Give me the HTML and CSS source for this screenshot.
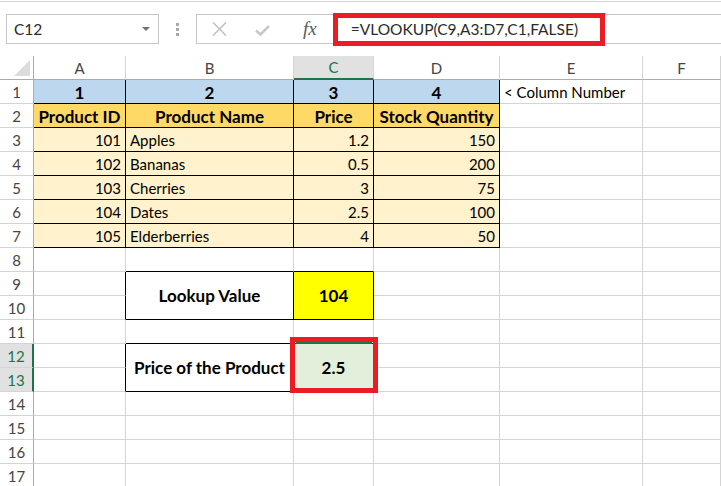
FILE: index.html
```html
<!DOCTYPE html>
<html>
<head>
<meta charset="utf-8">
<link rel="stylesheet" href="styles.css">
</head>
<body>
<div class="app">
  <div class="toolbar">
    <div class="namebox"><span class="nb-text">C12</span><span class="caret"></span></div>
    <div class="grip"><i></i><i></i><i></i></div>
    <div class="fbar">
      <svg class="ico-x" width="15" height="14" viewBox="0 0 15 14"><path d="M1 0.5 L14 13.5 M14 0.5 L1 13.5" stroke="#c3c3c3" stroke-width="1.6" fill="none"/></svg>
      <svg class="ico-ok" width="15" height="11" viewBox="0 0 15 11"><path d="M1 5.5 L5.5 9.5 L14 1" stroke="#c8c8c8" stroke-width="2.6" fill="none"/></svg>
      <span class="fx">fx</span>
      <span class="ftext">=VLOOKUP(C9,A3:D7,C1,FALSE)</span>
      <div class="hl-formula"></div>
    </div>
  </div>
  <table class="sheet">
    <colgroup>
      <col class="w-rh"><col class="w-a"><col class="w-b"><col class="w-c"><col class="w-d"><col class="w-e"><col class="w-f">
    </colgroup>
    <tr class="hdr">
      <td class="corner"><svg width="16" height="16" viewBox="0 0 16 16"><path d="M16 0 L16 16 L0 16 Z" fill="#dcdcdc"/></svg></td>
      <td class="ch">A</td><td class="ch">B</td><td class="ch sel">C</td><td class="ch">D</td><td class="ch">E</td><td class="ch">F</td>
    </tr>
    <tr>
      <td class="rh">1</td>
      <td class="bk blue c b">1</td><td class="bk blue c b">2</td><td class="bk blue c b">3</td><td class="bk blue c b">4</td>
      <td class="l">&lt; Column Number</td><td></td>
    </tr>
    <tr>
      <td class="rh">2</td>
      <td class="bk gold c b">Product ID</td><td class="bk gold c b">Product Name</td><td class="bk gold c b">Price</td><td class="bk gold c b">Stock Quantity</td>
      <td></td><td></td>
    </tr>
    <tr>
      <td class="rh">3</td>
      <td class="bk cream r">101</td><td class="bk cream l">Apples</td><td class="bk cream r">1.2</td><td class="bk cream r">150</td>
      <td></td><td></td>
    </tr>
    <tr>
      <td class="rh">4</td>
      <td class="bk cream r">102</td><td class="bk cream l">Bananas</td><td class="bk cream r">0.5</td><td class="bk cream r">200</td>
      <td></td><td></td>
    </tr>
    <tr>
      <td class="rh">5</td>
      <td class="bk cream r">103</td><td class="bk cream l">Cherries</td><td class="bk cream r">3</td><td class="bk cream r">75</td>
      <td></td><td></td>
    </tr>
    <tr>
      <td class="rh">6</td>
      <td class="bk cream r">104</td><td class="bk cream l">Dates</td><td class="bk cream r">2.5</td><td class="bk cream r">100</td>
      <td></td><td></td>
    </tr>
    <tr>
      <td class="rh">7</td>
      <td class="bk cream r">105</td><td class="bk cream l">Elderberries</td><td class="bk cream r">4</td><td class="bk cream r">50</td>
      <td></td><td></td>
    </tr>
    <tr>
      <td class="rh">8</td>
      <td></td><td class="bb"></td><td class="bb"></td><td></td><td></td><td></td>
    </tr>
    <tr>
      <td class="rh">9</td>
      <td class="br"></td>
      <td class="bk c b mid" rowspan="2">Lookup Value</td>
      <td class="bk yellow c b mid" rowspan="2">104</td>
      <td></td><td></td><td></td>
    </tr>
    <tr>
      <td class="rh">10</td>
      <td class="br"></td>
      <td></td><td></td><td></td>
    </tr>
    <tr>
      <td class="rh">11</td>
      <td></td><td class="bb"></td><td class="bb"></td><td></td><td></td><td></td>
    </tr>
    <tr>
      <td class="rh rsel">12</td>
      <td class="br"></td>
      <td class="bk c b mid" rowspan="2">Price of the Product</td>
      <td class="bk green c b mid active" rowspan="2">2.5<div class="hl-cell"><div class="selbar"></div></div></td>
      <td></td><td></td><td></td>
    </tr>
    <tr>
      <td class="rh rsel">13</td>
      <td class="br"></td>
      <td></td><td></td><td></td>
    </tr>
    <tr><td class="rh">14</td><td></td><td></td><td></td><td></td><td></td><td></td></tr>
    <tr><td class="rh">15</td><td></td><td></td><td></td><td></td><td></td><td></td></tr>
    <tr><td class="rh">16</td><td></td><td></td><td></td><td></td><td></td><td></td></tr>
    <tr><td class="rh">17</td><td></td><td></td><td></td><td></td><td></td><td></td></tr>
  </table>
</div>
</body>
</html>
```
FILE: styles.css
```css
* { box-sizing: border-box; }
html, body { margin: 0; padding: 0; background: #fff; }
body {
  width: 721px;
  height: 486px;
  overflow: hidden;
  font-family: Lato, "Liberation Sans", sans-serif;
  font-size: 15px;
  color: #000;
}
.app { width: 721px; }

.toolbar {
  margin-top: 1px;
  border-top: 1px solid #d6d6d6;
  height: 55px;
  padding-top: 12px;
  display: flex;
  align-items: flex-start;
}
.namebox {
  margin-left: 6px;
  width: 153px;
  height: 30px;
  border: 1px solid #c6c6c6;
  display: flex;
  align-items: center;
  justify-content: space-between;
  padding: 0 8px 0 7px;
  color: #2b2b2b;
  font-size: 15.5px;
}
.caret {
  width: 0; height: 0;
  border-left: 4px solid transparent;
  border-right: 4px solid transparent;
  border-top: 4px solid #727272;
}
.grip {
  margin-left: 17px;
  width: 3px;
  height: 30px;
  display: flex;
  flex-direction: column;
  justify-content: center;
  gap: 2px;
}
.grip i { display: block; width: 3px; height: 3px; background: #a9a9a9; }

.fbar {
  position: relative;
  margin-left: 17px;
  flex: 1;
  height: 30px;
  border: 1px solid #c6c6c6;
  border-right: none;
  display: flex;
  align-items: center;
}
.ico-x { margin-left: 15px; }
.ico-ok { margin-left: 28px; margin-top: 2px; }
.fx {
  margin-left: 33px;
  font-family: "Liberation Serif", serif;
  font-style: italic;
  font-size: 19px;
  color: #5a5a5a;
  line-height: 1;
  margin-top: -2px;
}
.ftext {
  margin-left: 34px;
  color: #2b2b2b;
  font-size: 15.5px;
}
.hl-formula {
  position: absolute;
  left: 136px;
  top: -2px;
  width: 272px;
  height: 33px;
  border: 5px solid #ec1c24;
}

.sheet {
  table-layout: fixed;
  border-collapse: separate;
  border-spacing: 0;
  width: 721px;
}
.w-rh { width: 34px; }
.w-a { width: 92px; }
.w-b { width: 168px; }
.w-c { width: 80px; }
.w-d { width: 126px; }
.w-e { width: 143px; }
.w-f { width: 78px; }

.sheet td {
  height: 24px;
  padding: 0 4px;
  border-right: 1px solid #d4d4d4;
  border-bottom: 1px solid #d4d4d4;
  line-height: 22px;
  white-space: nowrap;
  overflow: visible;
  vertical-align: bottom;
}
.sheet td.mid { vertical-align: middle; }

.sheet .hdr td {
  color: #444;
  text-align: center;
  border-bottom-color: #ababab;
  border-right-color: #d4d4d4;
}
.sheet td.corner {
  padding: 0 3px 3px 0;
  text-align: right;
  border-right-color: #ababab;
  line-height: 0;
  vertical-align: bottom;
}
.sheet .hdr td.sel {
  background: #e1e1e1;
  color: #217346;
  border-bottom: 2px solid #217346;
}
.sheet td.rh {
  color: #444;
  text-align: center;
  padding: 0;
  border-right-color: #ababab;
}
.sheet td.rsel {
  background: #e1e1e1;
  color: #217346;
  border-right: 2px solid #217346;
}

.sheet td.bk { border-right-color: #000; border-bottom-color: #000; }
.sheet td.bb { border-bottom-color: #000; }
.sheet td.br { border-right-color: #000; }

.c { text-align: center; }
.r { text-align: right; }
.l { text-align: left; }
.sheet td.b { font-weight: bold; font-size: 17px; line-height: 21px; }
.sheet td.b.mid { line-height: 22px; }

.blue { background: #bdd7ee; }
.gold { background: #ffd966; }
.cream { background: #fff2cc; }
.yellow { background: #ffff00; }
.green { background: #e2efda; }

.sheet td.active { position: relative; }
.hl-cell {
  position: absolute;
  left: -4px;
  top: -7px;
  width: 88px;
  height: 56px;
  border: 5px solid #ec1c24;
}
.selbar {
  height: 2px;
  margin: 0 1px;
  background: #217346;
}
```
